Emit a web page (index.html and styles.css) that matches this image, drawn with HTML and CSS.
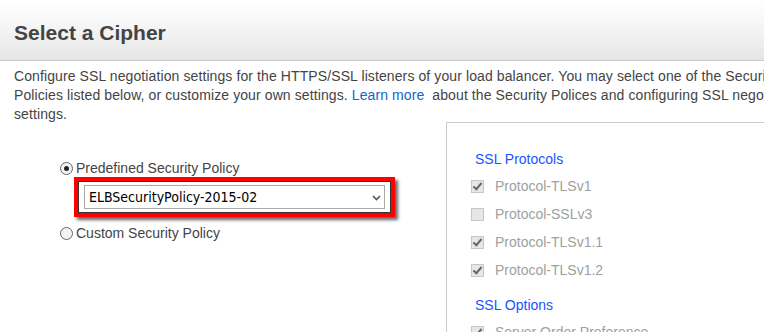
FILE: index.html
```html
<!DOCTYPE html>
<html>
<head>
<meta charset="utf-8">
<link rel="stylesheet" href="styles.css">
</head>
<body>
<div class="page">
  <div class="header"><h1 class="title">Select a Cipher</h1></div>
  <p class="intro">Configure SSL negotiation settings for the HTTPS/SSL listeners of your load balancer. You may select one of the Security Policies listed below, or customize your own settings. <a class="link">Learn more</a>&nbsp; about the Security Polices and configuring SSL negotiation settings.</p>
  <div class="main">
    <div class="left">
      <label class="radio-row"><span class="radio checked"></span>Predefined Security Policy</label>
      <div class="highlight">
        <div class="select"><span>ELBSecurityPolicy-2015-02</span>
          <svg class="chev" width="9" height="6" viewBox="0 0 9 6"><path d="M1 1 L4.5 4.5 L8 1" fill="none" stroke="#555" stroke-width="1.6"/></svg>
        </div>
      </div>
      <label class="radio-row"><span class="radio"></span>Custom Security Policy</label>
    </div>
    <div class="panel">
      <div class="group-title">SSL Protocols</div>
      <div class="check-row"><span class="box checked"></span>Protocol-TLSv1</div>
      <div class="check-row"><span class="box"></span>Protocol-SSLv3</div>
      <div class="check-row"><span class="box checked"></span>Protocol-TLSv1.1</div>
      <div class="check-row"><span class="box checked"></span>Protocol-TLSv1.2</div>
      <div class="group-title second">SSL Options</div>
      <div class="check-row"><span class="box checked"></span>Server Order Preference</div>
    </div>
  </div>
</div>
</body>
</html>
```
FILE: styles.css
```css
html, body {
  margin: 0;
  padding: 0;
  background: #fff;
  overflow: hidden;
}
.page {
  width: 1100px;
  height: 332px;
  font-family: "Liberation Sans", Arial, sans-serif;
  color: #444;
}
.header {
  height: 60px;
  border-bottom: 1px solid #c8c8c8;
  background: linear-gradient(to bottom, #ffffff 0%, #f6f6f6 40%, #e6e6e6 100%);
  display: flex;
  align-items: center;
  padding-left: 14px;
}
.title {
  margin: 0;
  font-size: 21px;
  font-weight: bold;
  color: #444;
  padding-top: 5px;
}
.intro {
  margin: 6px 0 0 14px;
  width: 805px;
  font-size: 14px;
  line-height: 19px;
  letter-spacing: 0.1px;
}
.link {
  color: #1166cc;
}
.main {
  display: flex;
  margin-top: -2px;
}
.left {
  flex: 0 0 446px;
  padding-top: 38px;
  display: flex;
  flex-direction: column;
  align-items: flex-start;
}
.radio-row {
  display: flex;
  align-items: center;
  font-size: 14px;
  color: #444;
  margin-left: 60px;
  height: 16px;
}
.radio {
  width: 13px;
  height: 13px;
  border: 1px solid #666;
  border-radius: 50%;
  margin-right: 3px;
  box-sizing: border-box;
  position: relative;
  background: #f4f4f4;
}
.radio.checked::after {
  content: "";
  position: absolute;
  left: 3px;
  top: 3px;
  width: 5px;
  height: 5px;
  border-radius: 50%;
  background: #222;
}
.highlight {
  margin: 1px 0 8px 74px;
  width: 301px;
  border: 4px solid #f00;
  box-shadow: 3px 3px 3px rgba(0,0,0,0.6), inset 0 0 0 1px #333;
  padding: 4px 6px;
  background: #fff;
}
.select {
  height: 22px;
  border: 1px solid #a9a9a9;
  display: flex;
  align-items: center;
  justify-content: space-between;
  padding: 0 3px 0 4px;
  font-family: "DejaVu Sans", "Noto Sans", sans-serif;
  font-stretch: condensed;
  font-size: 14px;
  color: #000;
}
.chev {
  margin-top: 1px;
}
.panel {
  flex: 0 0 600px;
  height: 260px;
  border: 1px solid #cccccc;
  border-right: none;
  padding: 27px 0 0 24px;
  box-sizing: border-box;
}
.group-title {
  color: #1a53ff;
  font-size: 14px;
  line-height: 18px;
  margin-left: 4px;
  margin-bottom: 4px;
}
.group-title.second {
  margin-top: 12px;
}
.check-row {
  display: flex;
  align-items: center;
  height: 28px;
  font-size: 14px;
  color: #a0a0a0;
}
.box {
  width: 13px;
  height: 13px;
  box-sizing: border-box;
  border: 1px solid #c6c6c6;
  background: #e6e6e6;
  margin-right: 11px;
  position: relative;
}
.box.checked::after {
  content: "";
  position: absolute;
  left: 3px;
  top: 0px;
  width: 3px;
  height: 7px;
  border-right: 2px solid #666;
  border-bottom: 2px solid #666;
  transform: rotate(40deg);
}
```
